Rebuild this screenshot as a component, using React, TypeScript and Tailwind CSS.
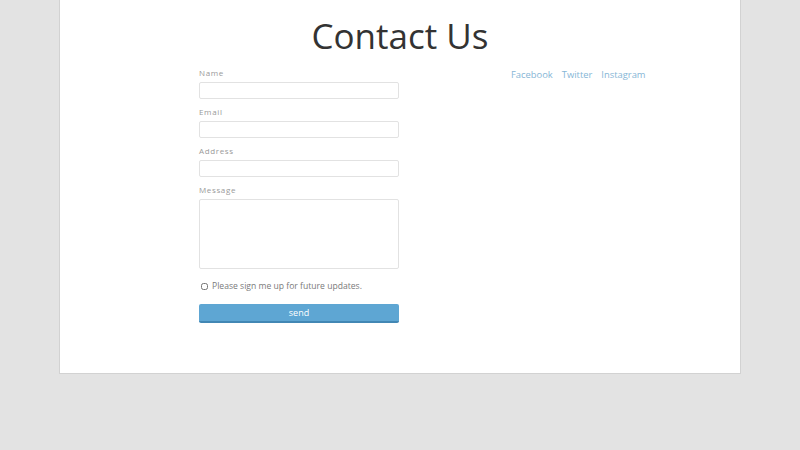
import { useState } from 'react';

const font = { fontFamily: '"Open Sans", "Liberation Sans", sans-serif' };

function Field({ label, tall }: { label: string; tall?: boolean }) {
  return (
    <div className="mb-[7px]">
      <label className="block h-[12px] text-[8px] leading-[12px] tracking-[0.08em] text-[#999] mb-[3px]">{label}</label>
      {tall ? (
        <textarea className="block w-full h-[70px] border border-[#e2e2e2] rounded-[2px] resize-none outline-none" />
      ) : (
        <input className="block w-full h-[17px] border border-[#e2e2e2] rounded-[2px] outline-none" />
      )}
    </div>
  );
}

export default function App() {
  const [subscribe, setSubscribe] = useState(false);

  return (
    <div className="min-h-screen bg-[#e3e3e3]" style={font}>
      <div className="mx-auto w-[682px] h-[374px] bg-white border-x border-b border-[#d2d2d2]">
        <h1 className="pt-[14px] text-center text-[35px] leading-[44px] text-[#333] font-normal">Contact Us</h1>

        <div className="flex pl-[139px] pt-[9px]">
          {/* Form */}
          <form className="w-[200px]" onSubmit={(e) => e.preventDefault()}>
            <Field label="Name" />
            <Field label="Email" />
            <Field label="Address" />
            <Field label="Message" tall />

            <label className="flex items-center gap-[4px] pt-[4px] pl-[2px] text-[8.6px] leading-[12px] text-[#7a7a7a]">
              <input
                type="checkbox"
                checked={subscribe}
                onChange={(e) => setSubscribe(e.target.checked)}
                className="w-[7px] h-[7px] m-0"
              />
              Please sign me up for future updates.
            </label>

            <button
              type="submit"
              className="mt-[12px] w-full h-[19px] bg-[#5ea6d3] border-b-2 border-[#4287b4] rounded-[2px] text-[9px] text-white"
            >
              send
            </button>
          </form>

          {/* Social links */}
          <div className="ml-[112px] flex gap-[9px] text-[9.4px] leading-[12px] text-[#86b6d6] pt-[2px]">
            <a href="#">Facebook</a>
            <a href="#">Twitter</a>
            <a href="#">Instagram</a>
          </div>
        </div>
      </div>
    </div>
  );
}
